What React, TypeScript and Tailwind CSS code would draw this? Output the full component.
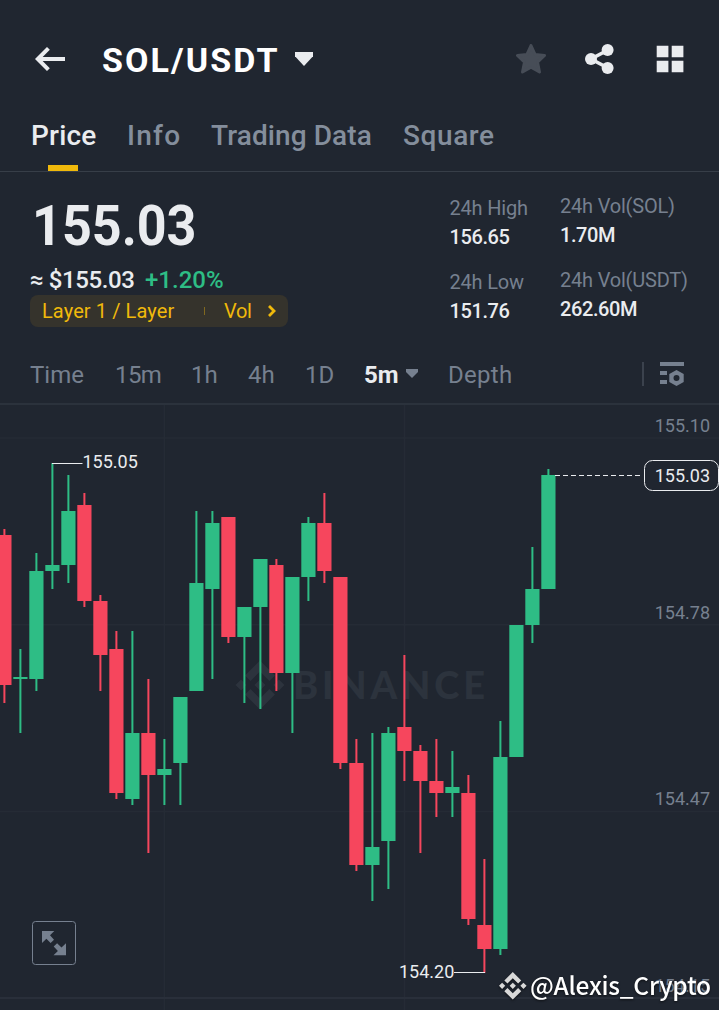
import React from 'react';

type Candle = [high: number, top: number, bottom: number, low: number, up: 0 | 1];

// Values are ticks of 0.01 above 154.20
const candles: Candle[] = [
  [74, 73, 48, 45, 0],
  [54, 49, 49, 40, 1],
  [70, 67, 49, 47, 1],
  [85, 68, 67, 64, 1],
  [83, 77, 68, 65, 1],
  [80, 78, 62, 61, 0],
  [63, 62, 53, 47, 0],
  [57, 54, 30, 29, 0],
  [57, 40, 29, 28, 1],
  [49, 40, 33, 20, 0],
  [39, 34, 33, 28, 1],
  [46, 46, 35, 28, 1],
  [77, 65, 47, 47, 1],
  [77, 75, 64, 49, 1],
  [76, 76, 56, 55, 0],
  [61, 61, 56, 45, 1],
  [69, 69, 61, 44, 1],
  [69, 68, 50, 47, 0],
  [66, 66, 50, 40, 1],
  [76, 75, 66, 62, 1],
  [80, 75, 67, 65, 0],
  [66, 66, 35, 34, 0],
  [39, 35, 18, 17, 0],
  [40, 21, 18, 12, 1],
  [41, 40, 22, 14, 1],
  [53, 41, 37, 32, 0],
  [38, 37, 32, 20, 0],
  [39, 32, 30, 26, 0],
  [37, 31, 30, 26, 1],
  [33, 30, 9, 8, 0],
  [19, 8, 4, 0, 0],
  [42, 36, 4, 3, 1],
  [58, 58, 36, 36, 1],
  [71, 64, 58, 55, 1],
  [84, 83, 64, 64, 1],
];

const GREEN = '#2ebd85';
const RED = '#f6465d';

const LOGO_PATH =
  'M16.624 13.9202l2.7175 2.7154-7.353 7.353-7.353-7.352 2.7175-2.7164 4.6355 4.6595 4.6356-4.6595zm4.6366-4.6366L24 12l-2.7154 2.7164L18.5682 12l2.6924-2.7164zm-9.272.001l2.7163 2.6914-2.7164 2.7174v-.001L9.2721 12l2.7164-2.7154zm-9.2722-.001L5.4088 12l-2.6914 2.6924L0 12l2.7164-2.7164zM11.9885.0115l7.353 7.329-2.7174 2.7154-4.6356-4.6356-4.6355 4.6595-2.7174-2.7154 7.353-7.353z';

const toY = (tick: number) => 973 - tick * 6;

const priceLabels = [
  { y: 432, text: '155.10' },
  { y: 619, text: '154.78' },
  { y: 805, text: '154.47' },
  { y: 992, text: '154.15' },
];

function Header() {
  return (
    <header className="flex h-[119px] items-center px-[35px] pb-px">
      <svg className="h-6 w-[30px] shrink-0" viewBox="0 0 30 24" fill="none" stroke="#eaecef" strokeWidth="4">
        <path d="M2.5 12H30" />
        <path d="M13.4 1.4 2.8 12l10.6 10.6" />
      </svg>
      <h1 className="ml-[37px] w-[178px] whitespace-nowrap pt-0.5 text-[34px] font-bold leading-10 tracking-[2.1px] text-white">
        SOL/USDT
      </h1>
      <svg className="ml-[15px] h-[14px] w-[18px] shrink-0" viewBox="0 0 18 14" fill="#eaecef">
        <path d="M0 0h18v4.2L9 14 0 4.2z" />
      </svg>
      <div className="ml-auto flex items-center">
        <svg className="size-[30px]" viewBox="0 0 30 30">
          <path
            d="M15 1.5l4.1 9 9.4 1-7 6.6 2 9.9-8.5-4.7L6.5 28l2-9.9-7-6.6 9.4-1z"
            fill="#474d57"
            stroke="#474d57"
            strokeWidth="3"
            strokeLinejoin="round"
          />
        </svg>
        <svg className="ml-[38px] size-[30px]" viewBox="0 0 30 30" fill="#eaecef">
          <path d="M24 6 7 15l17 9" fill="none" stroke="#eaecef" strokeWidth="3.6" />
          <circle cx="7" cy="15" r="6" />
          <circle cx="23.6" cy="6" r="6" />
          <circle cx="23.6" cy="24" r="6" />
        </svg>
        <svg className="ml-[42px] h-7 w-[28px]" viewBox="0 0 28 28" fill="#eaecef">
          <path d="M.7.7h11.7v11.5H.7zM15.7.7h11.7v11.5H15.7zM.7 15.7h11.7v11.5H.7zM15.7 15.7h11.7v11.5H15.7z" />
        </svg>
      </div>
    </header>
  );
}

function Tabs() {
  return (
    <nav className="flex h-[53px] whitespace-nowrap border-b border-[#373e48] pl-[31px] text-[28px] font-medium leading-[34px] text-[#848e9c]">
      <div className="flex w-24 flex-col justify-between">
        <span className="tracking-[0.2px] text-[#eaecef]">Price</span>
        <span className="ml-[17px] h-1.5 w-[30px] bg-[#f0b90b]" />
      </div>
      <span className="w-[84px] tracking-[1.3px]">Info</span>
      <span className="w-48 tracking-[0.1px]">Trading Data</span>
      <span className="tracking-[0.6px]">Square</span>
    </nav>
  );
}

function Stat({ label, value }: { label: string; value: string }) {
  return (
    <div className="h-[74px] whitespace-nowrap text-xl">
      <div className="h-[29px] leading-[28px] tracking-[-0.2px] text-[#76808f]">{label}</div>
      <div className="font-medium leading-[29px] tracking-[-0.4px] text-[#eaecef]">{value}</div>
    </div>
  );
}

function Summary() {
  return (
    <section className="flex h-[173px]">
      <div className="w-[420px] pl-[30px]">
        <div className="h-[88px] pt-[21px]">
          <div className="ml-0.5 w-fit origin-left scale-x-[0.93] text-[56px] font-bold leading-[66px] text-[#eaecef]">
            155.03
          </div>
        </div>
        <div className="flex h-[35px] items-center pt-1.5 text-2xl font-medium leading-[29px]">
          <span className="w-[115px] whitespace-nowrap tracking-[-0.4px] text-[#eaecef]">≈ $155.03</span>
          <span className="text-[#2ebd85]">+1.20%</span>
        </div>
        <div className="flex h-8 w-[258px] items-center rounded-lg bg-[#35332c] pl-3 text-xl text-[#f0b90b]">
          <span className="w-[162px] whitespace-nowrap tracking-[0.1px]">Layer 1 / Layer</span>
          <span className="h-2 w-px bg-[#80681f]" />
          <span className="ml-[19px] w-11 tracking-[-0.3px]">Vol</span>
          <svg className="h-3 w-2" viewBox="0 0 8 12" fill="none" stroke="#f0b90b" strokeWidth="2.8">
            <path d="M1 1l5 5-5 5" />
          </svg>
        </div>
      </div>
      <div className="w-[111px] pl-[29.5px] pt-[22px]">
        <Stat label="24h High" value="156.65" />
        <Stat label="24h Low" value="151.76" />
      </div>
      <div className="flex-1 pl-[29px] pt-5">
        <Stat label="24h Vol(SOL)" value="1.70M" />
        <Stat label="24h Vol(USDT)" value="262.60M" />
      </div>
    </section>
  );
}

function Intervals() {
  return (
    <div className="flex h-[58px] items-center whitespace-nowrap pl-[30px] text-2xl text-[#76808f]">
      <span className="w-[85px] pt-0.5">Time</span>
      <span className="w-[76px] pt-0.5 tracking-[-0.6px]">15m</span>
      <span className="w-[57px] pt-0.5">1h</span>
      <span className="w-[57px] pt-0.5">4h</span>
      <span className="w-[59px] pt-0.5">1D</span>
      <span className="w-[42px] pt-0.5 font-bold text-[#eaecef]">5m</span>
      <svg className="mb-0.5 h-[9px] w-3" viewBox="0 0 12 9" fill="#76808f">
        <path d="M0 0h12v3L6 9 0 3z" />
      </svg>
      <span className="ml-[30px] pt-0.5 tracking-[0.3px]">Depth</span>
      <span className="ml-auto h-6 w-0.5 bg-[#3b424d]" />
      <svg className="ml-4 mr-[35px] size-6" viewBox="0 0 24 24" fill="#76808f">
        <path d="M0 0h24v4H0zM0 9h7v4H0zM0 18h7v4H0z" />
        <path
          fillRule="evenodd"
          d="M16.5 8l7.2 4v8l-7.2 4-7.2-4v-8zM16.5 13a3 3 0 1 0 0 6 3 3 0 0 0 0-6z"
        />
      </svg>
    </div>
  );
}

function Chart() {
  return (
    <svg
      className="block h-[607px] w-[719px] font-[Roboto,'Liberation_Sans',sans-serif]"
      viewBox="0 403 719 607"
      fontSize="18"
    >
      {/* grid */}
      <path d="M0 404h719" stroke="#2b323c" strokeWidth="2" />
      <path d="M0 438h719M0 624.7h719M0 811.5h719M164.3 405v605M404.5 405v605" stroke="#252b35" strokeWidth="1.5" />
      <path d="M0 998h719" stroke="#292f3a" strokeWidth="2" />

      {/* watermark */}
      <g fill="#2c333d">
        <path d={LOGO_PATH} transform="translate(235.5 660.5) scale(2.04)" />
        <text
          x="293"
          y="699"
          fontSize="38"
          fontWeight="900"
          textLength="192"
          className="font-[Lato,Inter,sans-serif]"
        >
          BINANCE
        </text>
      </g>

      {candles.map(([high, top, bottom, low, up], i) => {
        const x = 4.4 + i * 16;
        const h = Math.max(toY(bottom) - toY(top), 2);
        return (
          <g key={i} fill={up ? GREEN : RED}>
            <rect x={x - 1} y={toY(high)} width="2" height={toY(low) - toY(high)} />
            <rect x={x - 7.1} y={toY(bottom) - h} width="14.2" height={h} />
          </g>
        );
      })}

      {/* high / low markers */}
      <path d="M52 463.5h30.5M454 972.5h31" stroke="#eaecef" />
      <g fill="#eaecef">
        <text x="82.5" y="468">155.05</text>
        <text x="399" y="978">154.20</text>
      </g>

      <g fill="#76808f" textAnchor="end">
        {priceLabels.map((label) => (
          <text key={label.text} x="710" y={label.y}>
            {label.text}
          </text>
        ))}
      </g>

      {/* last price */}
      <path d="M555 475.5h85" stroke="#eaecef" strokeDasharray="5 3" />
      <rect x="644.5" y="460.5" width="74" height="30" rx="8" fill="#202630" stroke="#eaecef" />
      <text x="710" y="482" fill="#eaecef" textAnchor="end">155.03</text>

      {/* fullscreen button */}
      <rect x="32.5" y="921.5" width="43" height="43" rx="3" fill="none" stroke="#76808f" />
      <path
        d="M42 931h12.3l-4.3 4.3 4 4.4-3.4 3.4-4.2-4.4-4.4 4.4zM66 955.3H53.5l4.4-4.3-4.2-4.4 3.4-3.4 4.4 4.4 4.5-4.3z"
        fill="#76808f"
      />

      {/* author signature */}
      <g className="drop-shadow-[0_1px_1px_rgba(0,0,0,0.6)]">
        <path d={LOGO_PATH} transform="translate(499 972) scale(1.15)" fill="#d9d9d9" />
        <text
          x="530"
          y="995"
          fontSize="24.5"
          fontWeight="500"
          fill="#fff"
          textLength="181"
          className="font-['Noto_Sans_CJK_SC','Noto_Sans',sans-serif]"
        >
          @Alexis_Crypto
        </text>
      </g>
    </svg>
  );
}

export default function App() {
  return (
    <main className="h-[1010px] w-[719px] overflow-hidden bg-[#202630] font-[Roboto,'Liberation_Sans',sans-serif]">
      <Header />
      <Tabs />
      <Summary />
      <Intervals />
      <Chart />
    </main>
  );
}
